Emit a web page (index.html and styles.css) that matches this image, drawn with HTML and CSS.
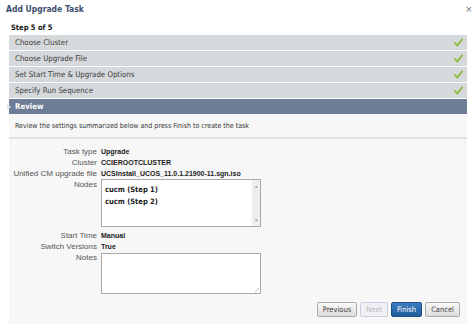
FILE: index.html
```html
<!DOCTYPE html>
<html lang="en">
<head>
  <meta charset="UTF-8">
  <title>Add Upgrade Task</title>
  <link rel="stylesheet" href="styles.css">
</head>
<body>
  <div class="dialog">
    <div class="header">
      <span class="title">Add Upgrade Task</span>
      <span class="close">&times;</span>
    </div>

    <div class="step-count">Step 5 of 5</div>

    <ul class="steps">
      <li class="step done">Choose Cluster<svg class="check" viewBox="0 0 10 10"><path d="M1 5.5 L3.8 8.5 L9 1.5" /></svg></li>
      <li class="step done">Choose Upgrade File<svg class="check" viewBox="0 0 10 10"><path d="M1 5.5 L3.8 8.5 L9 1.5" /></svg></li>
      <li class="step done">Set Start Time &amp; Upgrade Options<svg class="check" viewBox="0 0 10 10"><path d="M1 5.5 L3.8 8.5 L9 1.5" /></svg></li>
      <li class="step done">Specify Run Sequence<svg class="check" viewBox="0 0 10 10"><path d="M1 5.5 L3.8 8.5 L9 1.5" /></svg></li>
      <li class="step current">Review</li>
    </ul>

    <div class="panel">
      <div class="intro">Review the settings summarized below and press Finish to create the task</div>

      <div class="form">
        <div class="label">Task type</div>
        <div class="value">Upgrade</div>

        <div class="label">Cluster</div>
        <div class="value">CCIEROOTCLUSTER</div>

        <div class="label">Unified CM upgrade file</div>
        <div class="value">UCSInstall_UCOS_11.0.1.21900-11.sgn.iso</div>

        <div class="label">Nodes</div>
        <div class="box nodes">
          <div class="node">cucm (Step 1)</div>
          <div class="node">cucm (Step 2)</div>
          <div class="scrollbar"><span>&#9652;</span><span>&#9662;</span></div>
        </div>

        <div class="label">Start Time</div>
        <div class="value">Manual</div>

        <div class="label">Switch Versions</div>
        <div class="value">True</div>

        <div class="label">Notes</div>
        <div class="box notes"><span class="grip"></span></div>
      </div>

      <div class="actions">
        <button class="btn">Previous</button>
        <button class="btn" disabled>Next</button>
        <button class="btn primary">Finish</button>
        <button class="btn">Cancel</button>
      </div>
    </div>
  </div>
</body>
</html>
```

FILE: styles.css
```css
body {
  margin: 0;
  background-color: #fff;
  font-family: "Liberation Sans", Arial, sans-serif;
  color: #333;
}
.dialog {
  width: 458px;
  padding: 0 7px 0 9px;
}
.header {
  display: flex;
  justify-content: space-between;
  align-items: center;
  height: 18px;
}
.title {
  font-family: "DejaVu Sans Condensed", "DejaVu Sans", sans-serif;
  font-weight: bold;
  font-size: 8.5px;
  color: #3d4f6e;
  margin-left: -3px;
}
.close {
  font-size: 11px;
  color: #777;
  margin-right: -5px;
}
.step-count {
  font-family: "DejaVu Sans Condensed", "DejaVu Sans", sans-serif;
  font-weight: bold;
  font-size: 7.5px;
  color: #111;
  height: 17px;
  line-height: 20px;
  margin-left: 2px;
}
.steps {
  list-style: none;
  margin: 0;
  padding: 0;
}
.step {
  display: flex;
  justify-content: space-between;
  align-items: center;
  height: 15px;
  margin-bottom: 1px;
  padding: 0 4px 0 6px;
  background-color: #d6d9dc;
  font-family: "DejaVu Sans Condensed", "DejaVu Sans", sans-serif;
  font-size: 7.8px;
  color: #3a3a3a;
}
.step .check {
  width: 9px;
  height: 9px;
}
.check path {
  fill: none;
  stroke: #8cbf3f;
  stroke-width: 2;
  stroke-linecap: round;
  stroke-linejoin: round;
}
.step.current {
  position: relative;
  margin-bottom: 0;
  background-color: #6d7d95;
  color: #fff;
  font-weight: bold;
}
.step.current::before {
  content: "";
  position: absolute;
  left: -2px;
  top: 5px;
  border-left: 4px solid #dfe6ef;
  border-top: 3px solid transparent;
  border-bottom: 3px solid transparent;
}
.panel {
  background-color: #f7f7f7;
  padding-bottom: 7px;
}
.intro {
  font-family: "DejaVu Sans Condensed", "DejaVu Sans", sans-serif;
  font-size: 7px;
  color: #333;
  padding: 8px 6px 7px;
  border-bottom: 2px solid #e0e0e0;
}
.form {
  display: grid;
  grid-template-columns: 88px 160px;
  column-gap: 4px;
  padding-top: 7px;
  font-size: 8px;
}
.label {
  text-align: right;
  color: #555;
  line-height: 11px;
}
.value {
  font-weight: bold;
  font-size: 7px;
  color: #222;
  line-height: 11px;
  min-height: 11px;
}
.box {
  position: relative;
  background-color: #fff;
  border: 1px solid #a9a9a9;
  margin: 0 0 3px;
}
.nodes {
  height: 48px;
  padding: 4px 0 0 3px;
  box-sizing: border-box;
}
.node {
  font-family: "DejaVu Sans Condensed", "DejaVu Sans", sans-serif;
  font-weight: bold;
  font-size: 7.5px;
  color: #222;
  line-height: 12px;
}
.scrollbar {
  position: absolute;
  top: 0;
  right: 0;
  bottom: 0;
  width: 8px;
  background-color: #eee;
  display: flex;
  flex-direction: column;
  justify-content: space-between;
  align-items: center;
  font-size: 5px;
  color: #999;
  padding: 3px 0;
  box-sizing: border-box;
}
.notes {
  height: 41px;
  box-sizing: border-box;
  margin-top: 1px;
}
.grip {
  position: absolute;
  right: 1px;
  bottom: 1px;
  width: 4px;
  height: 4px;
  background: linear-gradient(135deg, transparent 45%, #bbb 45%, #bbb 60%, transparent 60%);
}
.actions {
  display: flex;
  justify-content: flex-end;
  gap: 3px;
  padding: 5px 7px 0 0;
}
.btn {
  font-family: "DejaVu Sans Condensed", "DejaVu Sans", sans-serif;
  font-size: 7.5px;
  height: 15px;
  padding: 0 5px;
  border: 1px solid #aaa;
  border-radius: 2px;
  background: linear-gradient(#fafafa, #dcdcdc);
  color: #444;
}
.btn:disabled {
  color: #bbb;
  border-color: #ccd;
  background: #eef0f3;
}
.btn.primary {
  background: linear-gradient(#3b7cbf, #1f5c9c);
  border-color: #1d4f86;
  color: #fff;
}
```
